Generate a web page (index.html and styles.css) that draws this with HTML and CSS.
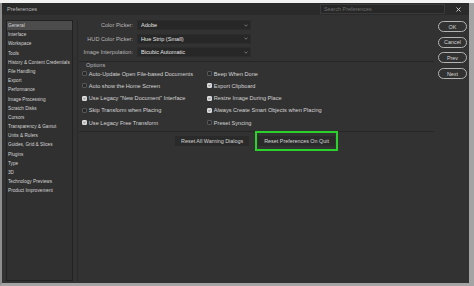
FILE: index.html
```html
<!DOCTYPE html>
<html lang="en">

<head>
    <meta charset="UTF-8">
    <meta name="viewport" content="width=device-width, initial-scale=1.0">
    <title>Preferences</title>
    <link rel="stylesheet" href="styles.css">
</head>

<body>
    <div class="window">
        <header class="title-bar">
            <span class="title">Preferences</span>
            <input class="search" type="text" placeholder="Search Preferences">
            <span class="close">
                <svg width="5" height="5" viewBox="0 0 5 5"><path d="M0.5 0.5L4.5 4.5M4.5 0.5L0.5 4.5" stroke="#d8d8d8" stroke-width="0.9" fill="none"/></svg>
            </span>
        </header>

        <div class="window-body">
            <ul class="nav">
                <li class="active">General</li>
                <li>Interface</li>
                <li>Workspace</li>
                <li>Tools</li>
                <li>History &amp; Content Credentials</li>
                <li>File Handling</li>
                <li>Export</li>
                <li>Performance</li>
                <li>Image Processing</li>
                <li>Scratch Disks</li>
                <li>Cursors</li>
                <li>Transparency &amp; Gamut</li>
                <li>Units &amp; Rulers</li>
                <li>Guides, Grid &amp; Slices</li>
                <li>Plugins</li>
                <li>Type</li>
                <li>3D</li>
                <li>Technology Previews</li>
                <li>Product Improvement</li>
            </ul>

            <main class="panel">
                <div class="field">
                    <label>Color Picker:</label>
                    <div class="select">Adobe<svg width="4" height="3" viewBox="0 0 4 3"><path d="M0.5 0.8L2 2.2L3.5 0.8" stroke="#9a9a9a" stroke-width="0.7" fill="none"/></svg></div>
                </div>
                <div class="field">
                    <label>HUD Color Picker:</label>
                    <div class="select">Hue Strip (Small)<svg width="4" height="3" viewBox="0 0 4 3"><path d="M0.5 0.8L2 2.2L3.5 0.8" stroke="#9a9a9a" stroke-width="0.7" fill="none"/></svg></div>
                </div>
                <div class="field">
                    <label>Image Interpolation:</label>
                    <div class="select">Bicubic Automatic<svg width="4" height="3" viewBox="0 0 4 3"><path d="M0.5 0.8L2 2.2L3.5 0.8" stroke="#9a9a9a" stroke-width="0.7" fill="none"/></svg></div>
                </div>

                <section class="options">
                    <h3>Options</h3>
                    <ul class="checks">
                        <li><span class="box"></span>Auto-Update Open File-based Documents</li>
                        <li><span class="box"></span>Beep When Done</li>
                        <li><span class="box"></span>Auto show the Home Screen</li>
                        <li><span class="box checked"></span>Export Clipboard</li>
                        <li><span class="box checked"></span>Use Legacy "New Document" Interface</li>
                        <li><span class="box checked"></span>Resize Image During Place</li>
                        <li><span class="box"></span>Skip Transform when Placing</li>
                        <li><span class="box checked"></span>Always Create Smart Objects when Placing</li>
                        <li><span class="box checked"></span>Use Legacy Free Transform</li>
                        <li><span class="box"></span>Preset Syncing</li>
                    </ul>
                </section>

                <div class="resets">
                    <button>Reset All Warning Dialogs</button>
                    <span class="highlight"><button>Reset Preferences On Quit</button></span>
                </div>
            </main>

            <aside class="actions">
                <button>OK</button>
                <button>Cancel</button>
                <button>Prev</button>
                <button>Next</button>
            </aside>
        </div>
    </div>
</body>

</html>
```

FILE: styles.css
```css
/* --- Base --- */
:root {
    --bg: #323232;
    --bar-bg: #2a2a2a;
    --field-bg: #272727;
    --line: #262626;
    --text: #d4d4d4;
    --muted: #b8b8b8;
    --frame: #a4a4a4;
    --highlight: #2bd22b;
    --font: "Liberation Sans", Arial, sans-serif;
}

body {
    margin: 0;
    padding-top: 3px;
    height: 286px;
    box-sizing: border-box;
    overflow: hidden;
    background: #f2f2f2;
    font-family: var(--font);
    font-size: 5.6px;
    color: var(--text);
}

button,
input {
    font-family: var(--font);
}

.window {
    height: 283px;
    box-sizing: border-box;
    display: flex;
    flex-direction: column;
    background: var(--bg);
    border-left: 2px solid #8e8e8e;
    border-right: 5px solid var(--frame);
    border-bottom: 3px solid var(--frame);
}

/* --- Title bar --- */
.title-bar {
    height: 12px;
    flex-shrink: 0;
    display: flex;
    align-items: center;
    padding-left: 5px;
    background: var(--bar-bg);
}

.title {
    flex: 1;
    color: var(--muted);
}

.search {
    width: 125px;
    height: 10px;
    box-sizing: border-box;
    padding: 0 3px;
    background: var(--field-bg);
    border: 1px solid #3a3a3a;
    color: var(--text);
    font-size: 5.4px;
    outline: none;
}

.search::placeholder {
    color: #6c6c6c;
}

.close {
    display: flex;
    margin: 0 8px 0 11px;
}

/* --- Layout --- */
.window-body {
    flex: 1;
    display: flex;
    padding: 5px 2px 2px 4px;
    min-height: 0;
}

.nav {
    width: 67px;
    box-sizing: border-box;
    margin: 0;
    padding: 0;
    list-style: none;
    background: #303030;
    border: 1px solid #222;
}

.nav li {
    height: 9.2px;
    line-height: 9.2px;
    padding-left: 1px;
    font-size: 4.7px;
    color: var(--text);
    white-space: nowrap;
}

.nav li.active {
    background: #4c4c4c;
}

.panel {
    flex: 1;
    margin-left: 4px;
    border-left: 1px solid #2a2a2a;
}

/* --- Dropdowns --- */
.field {
    display: flex;
    align-items: center;
    height: 10px;
    margin-bottom: 3.5px;
}

.field label {
    width: 55px;
    margin-right: 4px;
    text-align: right;
    color: var(--muted);
    white-space: nowrap;
}

.select {
    width: 114px;
    height: 10px;
    box-sizing: border-box;
    display: flex;
    align-items: center;
    justify-content: space-between;
    padding: 0 2px 0 3px;
    background: var(--field-bg);
    border: 1px solid #2c2c2c;
    color: #e4e4e4;
}

/* --- Options --- */
.options {
    margin: 3px 0 0 1px;
    border-top: 1px solid var(--line);
}

.options h3 {
    margin: 0;
    padding-left: 7px;
    height: 6px;
    line-height: 6px;
    font-size: 5.6px;
    font-weight: normal;
    color: var(--muted);
}

.checks {
    display: grid;
    grid-template-columns: 125px auto;
    margin: 0;
    padding: 0 0 0 3px;
    list-style: none;
}

.checks li {
    height: 12.25px;
    display: flex;
    align-items: center;
    gap: 1.8px;
    white-space: nowrap;
}

.box {
    width: 5px;
    height: 5px;
    box-sizing: border-box;
    flex-shrink: 0;
    background: #2a2a2a;
    border: 1px solid #555;
    border-radius: 1px;
}

.box.checked {
    background: #d9d9d9 url("data:image/svg+xml,%3Csvg xmlns='http://www.w3.org/2000/svg' viewBox='0 0 5 5'%3E%3Cpath d='M1 2.6L2.1 3.7L4 1.3' stroke='%23333' stroke-width='0.9' fill='none'/%3E%3C/svg%3E") center / 100% no-repeat;
    border-color: #d9d9d9;
}

/* --- Reset buttons --- */
.resets {
    display: flex;
    justify-content: center;
    align-items: center;
    gap: 6px;
    margin: 1.75px 0 0 1px;
    height: 19px;
    border-top: 1px solid var(--line);
}

.resets button {
    height: 10px;
    padding: 0 6px;
    background: #2a2a2a;
    border: none;
    color: var(--text);
    font-size: 5.4px;
    white-space: nowrap;
}

.highlight {
    display: flex;
    margin-top: -1px;
    padding: 3px 1px;
    border: 2px solid var(--highlight);
}

/* --- Dialog actions --- */
.actions {
    width: 29px;
    margin: 1px 0 0 4px;
    display: flex;
    flex-direction: column;
    gap: 4.7px;
}

.actions button {
    height: 11px;
    padding: 0;
    background: transparent;
    border: 1px solid #b4b4b4;
    border-radius: 6px;
    color: var(--text);
    font-size: 5.4px;
}
```
